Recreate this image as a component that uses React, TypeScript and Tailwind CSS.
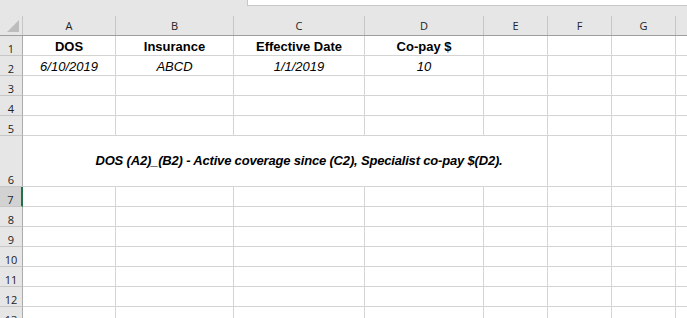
import React from "react";

const cols = [
  { key: "A", w: "w-[93px]" },
  { key: "B", w: "w-[118px]" },
  { key: "C", w: "w-[131px]" },
  { key: "D", w: "w-[119px]" },
  { key: "E", w: "w-[64px]" },
  { key: "F", w: "w-[64px]" },
  { key: "G", w: "w-[64px]" },
  { key: "H", w: "w-[64px]" },
];

const data: Record<number, { text: string; bold?: boolean; italic?: boolean }[]> = {
  1: [
    { text: "DOS", bold: true },
    { text: "Insurance", bold: true },
    { text: "Effective Date", bold: true },
    { text: "Co-pay $", bold: true },
  ],
  2: [
    { text: "6/10/2019", italic: true },
    { text: "ABCD", italic: true },
    { text: "1/1/2019", italic: true },
    { text: "10", italic: true },
  ],
};

const headerFont = { fontFamily: '"Open Sans", "Noto Sans", sans-serif' };
const cellFont = { fontFamily: '"Liberation Sans", Arial, sans-serif' };

const RowHeader = ({ n, tall, selected }: { n: number; tall?: boolean; selected?: boolean }) => (
  <div
    className={`flex w-[23px] shrink-0 items-end justify-center border-b border-r pb-[1px] text-[11px] leading-none ${
      tall ? "h-[51px]" : "h-[20px]"
    } ${
      selected
        ? "border-b-[#c6c6c6] border-r-2 border-r-[#217346] bg-[#d2d2d2] text-[#262626]"
        : "border-b-[#c6c6c6] border-r-[#ababab] bg-[#e6e6e6] text-[#222]"
    }`}
    style={headerFont}
  >
    {n}
  </div>
);

export default function App() {
  const rows = [1, 2, 3, 4, 5, 6, 7, 8, 9, 10, 11, 12, 13];

  return (
    <div className="h-[318px] w-[687px] overflow-hidden bg-white">
      {/* formula bar strip */}
      <div className="flex h-[16px] bg-[#e6e6e6]">
        <div className="w-[247px]" />
        <div className="h-[6px] flex-1 border-b border-l border-[#c6c6c6] bg-white" />
      </div>

      {/* column headers */}
      <div className="flex h-[20px] border-b border-[#9e9e9e] bg-[#e6e6e6]">
        <div className="relative w-[23px] shrink-0 border-r border-[#c6c6c6]">
          <svg className="absolute left-[6px] top-[3px]" width="14" height="14" viewBox="0 0 14 14">
            <polygon points="1,13 13,13 13,1" fill="#bdbdbd" />
          </svg>
        </div>
        {cols.map((c) => (
          <div
            key={c.key}
            className={`${c.w} flex shrink-0 items-center justify-center border-r border-[#c6c6c6] pt-[1px] text-[11px] text-[#222]`}
            style={headerFont}
          >
            {c.key === "H" ? "" : c.key}
          </div>
        ))}
      </div>

      {rows.map((r) => {
        if (r === 6) {
          return (
            <div key={r} className="flex">
              <RowHeader n={r} tall />
              <div
                className="flex h-[51px] w-[525px] shrink-0 items-center justify-center border-b border-r border-[#d4d4d4] pb-[1px] pl-[28px] text-[13px] font-bold italic tracking-[-0.18px] text-black"
                style={cellFont}
              >
                DOS (A2)_(B2) - Active coverage since (C2), Specialist co-pay $(D2).
              </div>
              {cols.slice(5).map((c) => (
                <div key={c.key} className={`${c.w} h-[51px] shrink-0 border-b border-r border-[#d4d4d4]`} />
              ))}
            </div>
          );
        }
        const cells = data[r] || [];
        return (
          <div key={r} className="flex">
            <RowHeader n={r} selected={r === 7} />
            {cols.map((c, i) => {
              const cell = cells[i];
              return (
                <div
                  key={c.key}
                  className={`${c.w} flex h-[20px] shrink-0 items-end justify-center border-b border-r border-[#d4d4d4] pb-[2px] text-[13px] leading-none text-black ${
                    cell?.bold ? "font-bold" : ""
                  } ${cell?.italic ? "italic" : ""}`}
                  style={cellFont}
                >
                  {cell?.text}
                </div>
              );
            })}
          </div>
        );
      })}
    </div>
  );
}
